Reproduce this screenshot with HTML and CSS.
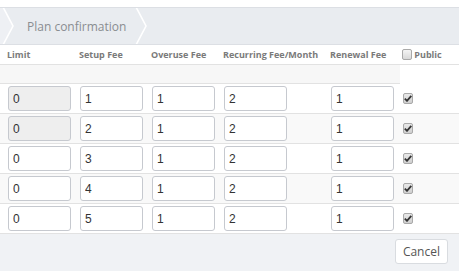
FILE: index.html
```html
<!DOCTYPE html>
<html>
<head>
    <meta charset="utf-8">
    <title>Plan confirmation</title>
    <link rel="stylesheet" href="styles.css">
</head>
<body>
    <div class="steps">
        <span class="step done">
            <svg class="chev" width="16" height="36" viewBox="0 0 16 36"><polygon points="0,0 3,0 13,18 3,36 0,36" fill="#eef0f4"/><polyline points="3,-1 13,18 3,37" fill="none" stroke="#fff" stroke-width="1.6"/></svg>
        </span>
        <span class="step current">Plan confirmation</span>
        <svg class="chev" width="14" height="36" viewBox="0 0 14 36"><polyline points="1,-1 11,18 1,37" fill="none" stroke="#fff" stroke-width="1.6"/></svg>
    </div>

    <table class="plans">
        <colgroup>
            <col style="width:72px"><col style="width:72px"><col style="width:72px">
            <col style="width:107px"><col style="width:72px"><col>
        </colgroup>
        <thead>
            <tr>
                <th>Limit</th>
                <th>Setup Fee</th>
                <th>Overuse Fee</th>
                <th>Recurring Fee/Month</th>
                <th>Renewal Fee</th>
                <th><span class="chk"></span> Public</th>
            </tr>
        </thead>
        <tbody>
            <tr class="spacer"><td colspan="6"><div class="filler"></div></td></tr>
            <tr>
                <td><input class="fld" value="0" disabled></td>
                <td><input class="fld" value="1"></td>
                <td><input class="fld" value="1"></td>
                <td><input class="fld" value="2"></td>
                <td><input class="fld" value="1"></td>
                <td><span class="chk on"><svg width="8" height="7" viewBox="0 0 8 7"><path d="M0.8 3.6 L3 5.8 L7.3 0.8" fill="none" stroke="#333" stroke-width="1.8"/></svg></span></td>
            </tr>
            <tr class="alt">
                <td><input class="fld" value="0" disabled></td>
                <td><input class="fld" value="2"></td>
                <td><input class="fld" value="1"></td>
                <td><input class="fld" value="2"></td>
                <td><input class="fld" value="1"></td>
                <td><span class="chk on"><svg width="8" height="7" viewBox="0 0 8 7"><path d="M0.8 3.6 L3 5.8 L7.3 0.8" fill="none" stroke="#333" stroke-width="1.8"/></svg></span></td>
            </tr>
            <tr>
                <td><input class="fld" value="0"></td>
                <td><input class="fld" value="3"></td>
                <td><input class="fld" value="1"></td>
                <td><input class="fld" value="2"></td>
                <td><input class="fld" value="1"></td>
                <td><span class="chk on"><svg width="8" height="7" viewBox="0 0 8 7"><path d="M0.8 3.6 L3 5.8 L7.3 0.8" fill="none" stroke="#333" stroke-width="1.8"/></svg></span></td>
            </tr>
            <tr class="alt">
                <td><input class="fld" value="0"></td>
                <td><input class="fld" value="4"></td>
                <td><input class="fld" value="1"></td>
                <td><input class="fld" value="2"></td>
                <td><input class="fld" value="1"></td>
                <td><span class="chk on"><svg width="8" height="7" viewBox="0 0 8 7"><path d="M0.8 3.6 L3 5.8 L7.3 0.8" fill="none" stroke="#333" stroke-width="1.8"/></svg></span></td>
            </tr>
            <tr>
                <td><input class="fld" value="0"></td>
                <td><input class="fld" value="5"></td>
                <td><input class="fld" value="1"></td>
                <td><input class="fld" value="2"></td>
                <td><input class="fld" value="1"></td>
                <td><span class="chk on"><svg width="8" height="7" viewBox="0 0 8 7"><path d="M0.8 3.6 L3 5.8 L7.3 0.8" fill="none" stroke="#333" stroke-width="1.8"/></svg></span></td>
            </tr>
        </tbody>
    </table>

    <div class="foot">
        <button type="button" class="btn">Cancel</button>
    </div>
</body>
</html>
```

FILE: styles.css
```css
html, body { margin: 0; padding: 0; background: #fff; }
body { padding-top: 7px; font-family: "Open Sans", "Liberation Sans", sans-serif; color: #333; }

.steps { display: flex; align-items: center; height: 36px; background: #e9ecf0; border-top: 1px solid #dcdfe4; border-bottom: 1px solid #dcdfe4; }
.steps .chev { display: block; flex: none; }
.step.current { padding: 0 9px 0 11px; font-size: 12px; color: #8a8d91; white-space: nowrap; }

.plans { width: 100%; border-collapse: collapse; table-layout: fixed; }
.plans th { height: 19px; padding: 0 0 0 7px; text-align: left; font-size: 9px; font-weight: 700; color: #7a7a7a; white-space: nowrap; border-bottom: 1px solid #e2e2e2; }
.plans td { height: 29px; padding: 0 0 0 8px; border-bottom: 1px solid #e2e2e2; vertical-align: middle; line-height: 0; }
.plans tr.alt td { background: #f9f9f9; }
.plans tr.spacer td { height: 18px; padding: 0; border-bottom: 0; }
.filler { width: 400px; height: 18px; background: #f7f7f7; border-bottom: 1px solid #e2e2e2; }

.fld { box-sizing: border-box; width: 63px; height: 25px; margin: 0; padding: 0 4px; border: 1px solid #c6c9cf; border-radius: 3px; background: #fff; font-family: "Liberation Sans", Arial, sans-serif; font-size: 12px; color: #333; vertical-align: middle; }
.fld:disabled { background: #eeeeee; color: #333; }

.chk { display: inline-flex; align-items: center; justify-content: center; box-sizing: border-box; width: 10px; height: 11px; border: 1px solid #a9a9a9; border-radius: 2px; background: linear-gradient(#f4f4f4, #d8d8d8); vertical-align: -2px; }
.plans td .chk { vertical-align: middle; }
.chk.on { background: linear-gradient(#e8e8e8, #cfcfcf); }

.foot { display: flex; justify-content: flex-end; padding: 5px 11px 8px; background: #f0f2f5; }
.btn { height: 25px; padding: 0 7px; background: #fff; border: 1px solid #d9dce0; border-radius: 3px; font-family: "Open Sans", "Liberation Sans", sans-serif; font-size: 12px; color: #555; }
```
